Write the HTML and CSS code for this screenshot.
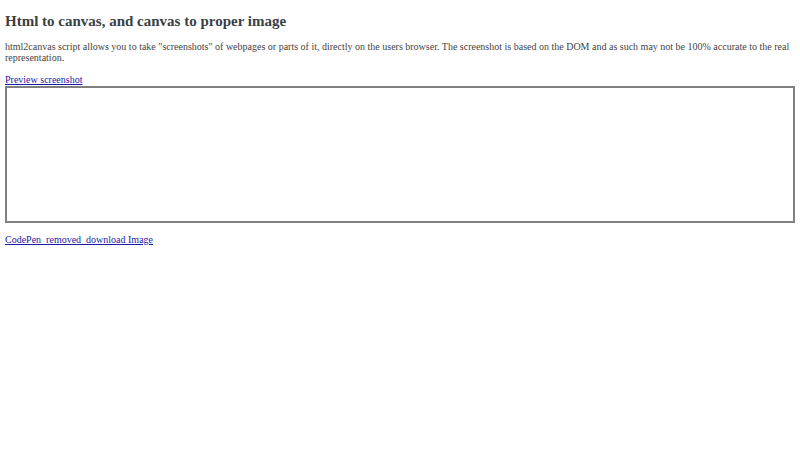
FILE: index.html
```html
<!DOCTYPE html>
<html>
<head>
<meta charset="utf-8">
<link rel="stylesheet" href="styles.css">
</head>
<body>
<h1 class="title">Html to canvas, and canvas to proper image</h1>
<p class="intro">html2canvas script allows you to take "screenshots" of webpages or parts of it, directly on the users browser. The screenshot is based on the DOM and as such may not be 100% accurate to the real representation.</p>
<a class="link" href="#">Preview screenshot</a>
<div class="preview"></div>
<a class="link download" href="#">CodePen_removed_download Image</a>
</body>
</html>
```
FILE: styles.css
```css
body {
  margin: 5px;
  font-family: "Liberation Serif", "Times New Roman", serif;
  font-size: 10px;
  color: #444;
  background: #fff;
}
.title {
  font-size: 15px;
  font-weight: bold;
  color: #3a3f44;
  margin: 8px 0 11px;
}
.intro {
  margin: 0 0 11px;
}
.link {
  color: #1a1aa6;
  display: inline-block;
}
.preview {
  height: 133px;
  border: 2px solid #808080;
  margin-top: 1px;
  margin-bottom: 11px;
}
```
